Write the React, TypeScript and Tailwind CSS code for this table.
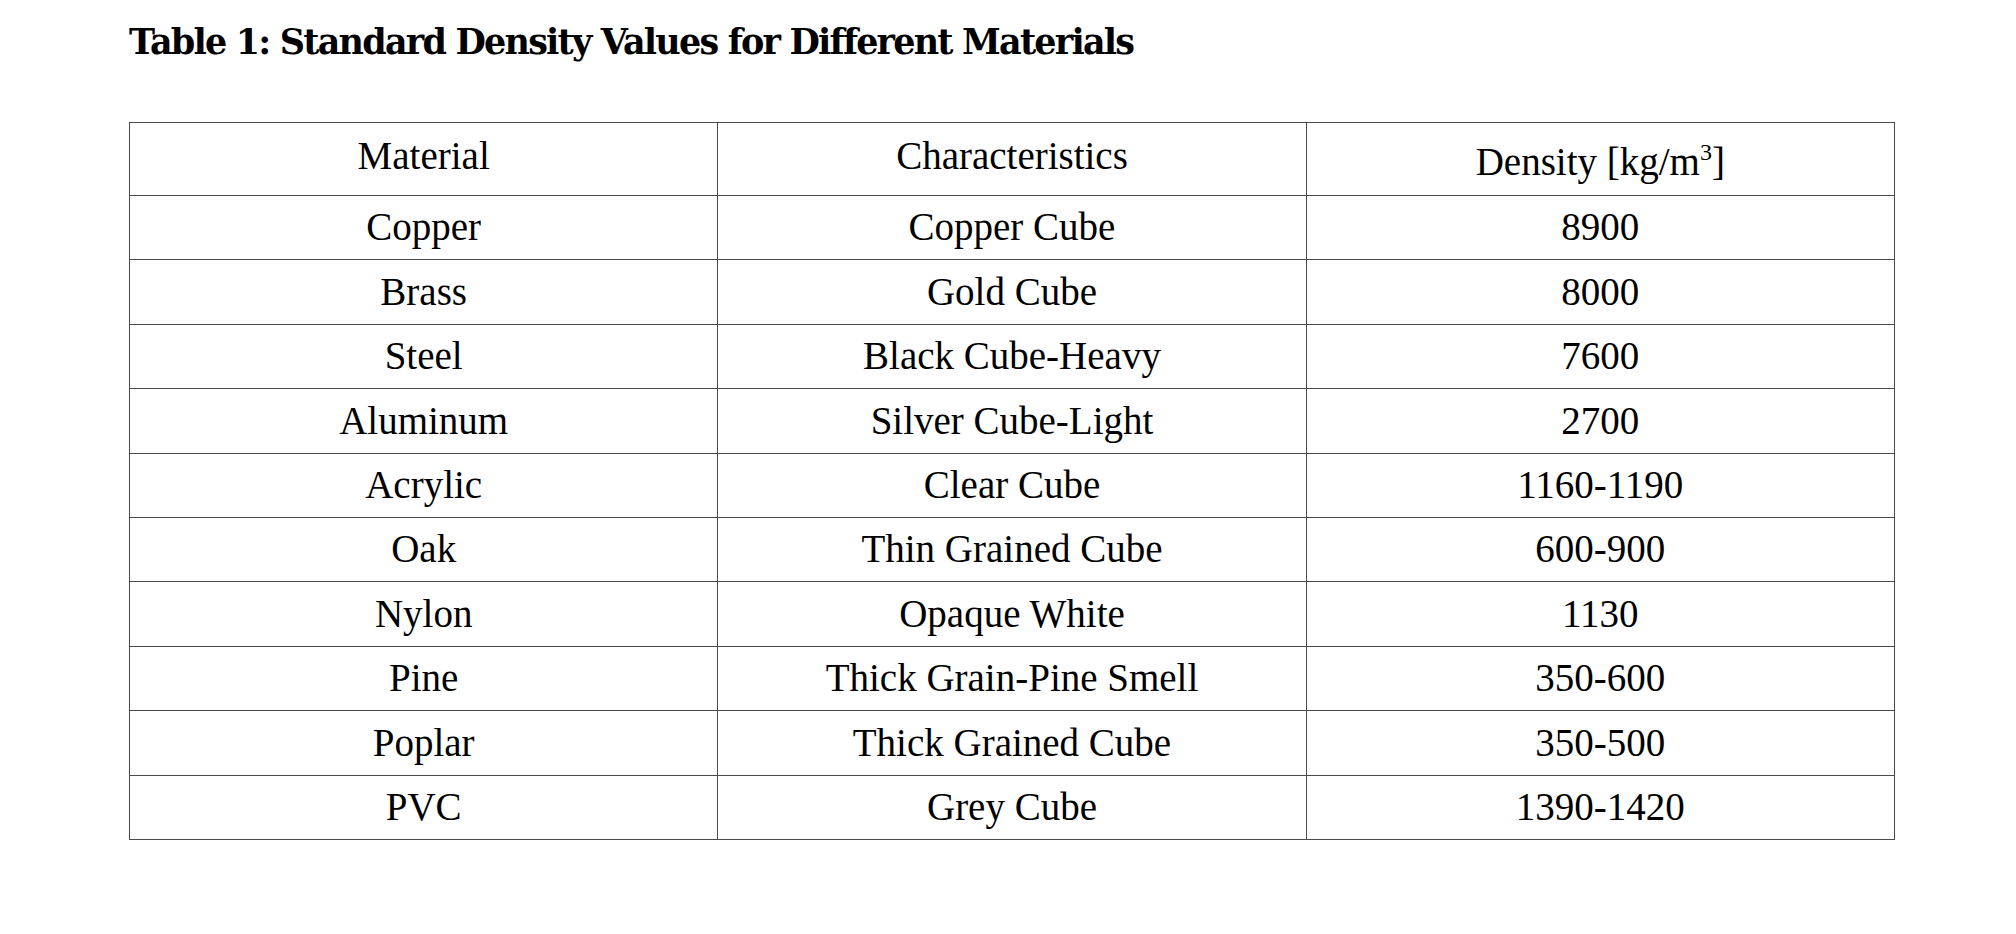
const rows = [
  ["Copper", "Copper Cube", "8900"],
  ["Brass", "Gold Cube", "8000"],
  ["Steel", "Black Cube-Heavy", "7600"],
  ["Aluminum", "Silver Cube-Light", "2700"],
  ["Acrylic", "Clear Cube", "1160-1190"],
  ["Oak", "Thin Grained Cube", "600-900"],
  ["Nylon", "Opaque White", "1130"],
  ["Pine", "Thick Grain-Pine Smell", "350-600"],
  ["Poplar", "Thick Grained Cube", "350-500"],
  ["PVC", "Grey Cube", "1390-1420"],
];

const App = () => {
  return (
    <div className="min-h-screen bg-white text-black font-['Liberation_Serif',serif] pl-[129px] pt-[20px]">
      {/* Caption */}
      <h1 className="font-['DejaVu_Serif',serif] text-[35px] leading-[44px] font-bold tracking-[-1.8px]">
        Table 1: Standard Density Values for Different Materials
      </h1>

      <table className="mt-[58px] w-[1766px] table-fixed border-collapse text-[39px] text-center">
        <thead>
          <tr className="h-[73px]">
            <th className="border border-[#4a4a4a] font-normal align-middle pb-[5px]">Material</th>
            <th className="border border-[#4a4a4a] font-normal align-middle pb-[5px]">Characteristics</th>
            <th className="border border-[#4a4a4a] font-normal align-middle pt-[7px]">
              Density [kg/m<sup className="text-[24px] top-[-0.65em]">3</sup>]
            </th>
          </tr>
        </thead>
        <tbody>
          {rows.map(([material, look, density]) => (
            <tr key={material} className="h-[64.4px]">
              <td className="border border-[#4a4a4a] align-middle">{material}</td>
              <td className="border border-[#4a4a4a] align-middle">{look}</td>
              <td className="border border-[#4a4a4a] align-middle">{density}</td>
            </tr>
          ))}
        </tbody>
      </table>
    </div>
  );
};

export default App;
